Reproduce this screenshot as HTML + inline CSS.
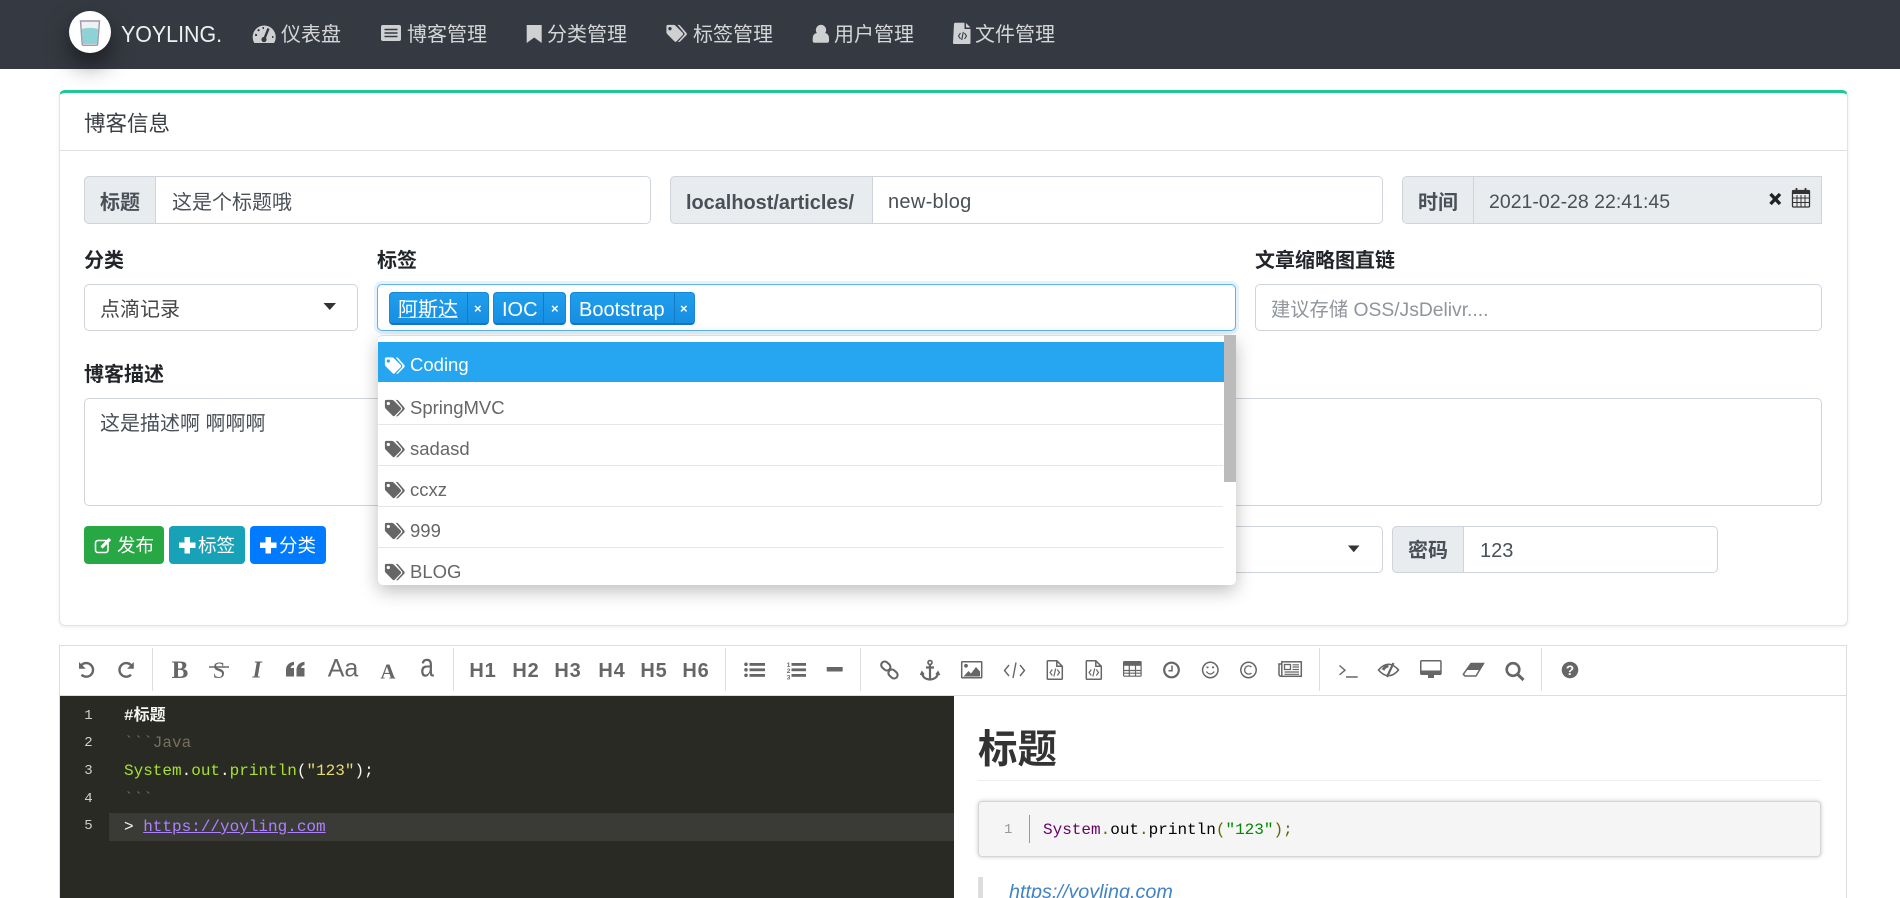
<!DOCTYPE html>
<html lang="zh"><head><meta charset="utf-8"><title>YOYLING</title>
<style>
html,body{margin:0;padding:0;width:1900px;height:898px;overflow:hidden;background:#fff}
body{font-family:"Liberation Sans","Noto Sans CJK SC",sans-serif;font-size:20px;color:#495057;position:relative}
div,span{box-sizing:border-box}
.a{position:absolute}
.t{position:absolute;white-space:nowrap;line-height:28px;height:28px}
.c{position:absolute;white-space:nowrap;transform:translate(-50%,-50%);line-height:1;color:#666}
.b{font-weight:700}
.box{position:absolute;background:#fff;border:1px solid #ced4da;border-radius:5px}
.addon{position:absolute;background:#e9ecef;border:1px solid #ced4da;border-radius:5px 0 0 5px}
.nav{color:#d4d6d8;font-size:20px}
.lab{color:#212529;font-weight:700}
.tag{position:absolute;top:292px;height:33px;border-radius:4px;background:linear-gradient(#1f9fec,#178ee2);border:1px solid #1a86d6;border-bottom:2px solid #1577c4}
.tag i{position:absolute;top:0;bottom:0;width:1px;background:#1579c4}
.w{color:#fff}
.sep{position:absolute;top:648px;height:43px;width:1px;background:#ddd}
.h{font-weight:700;font-size:20px;letter-spacing:.8px;top:671px}
.row{position:absolute;left:378px;width:845px;height:41px;border-bottom:1px solid #e6e6e6}
.dd{color:#666;font-size:18.5px}
.m{font-family:"Liberation Mono","Noto Sans CJK SC",monospace;font-size:16px}
.ln{position:absolute;left:61px;width:49px;text-align:center;padding-left:6px;color:#d0d0d0;font-family:"Liberation Mono",monospace;font-size:14px;line-height:28px;height:28px}
svg{position:absolute;left:0;top:0;overflow:visible}
</style></head><body>

<!-- navbar -->
<div class="a" style="left:0;top:0;width:1900px;height:69px;background:#353a42"></div>
<div class="a" style="left:69px;top:11px;width:41.500px;height:42px;border-radius:50%;background:#fff;box-shadow:0 12px 24px rgba(0,0,0,.5)"></div>
<div class="t" style="left:121px;top:20px;color:#eef0f2;font-size:23px;transform:scaleX(.93);transform-origin:left center">YOYLING.</div>
<div class="t nav" style="left:281px;top:21px">仪表盘</div>
<div class="t nav" style="left:407px;top:21px">博客管理</div>
<div class="t nav" style="left:547px;top:21px">分类管理</div>
<div class="t nav" style="left:693px;top:21px">标签管理</div>
<div class="t nav" style="left:834px;top:21px">用户管理</div>
<div class="t nav" style="left:975px;top:21px">文件管理</div>

<!-- card -->
<div class="a" style="left:59px;top:90px;width:1789px;height:536px;background:#fff;border:1px solid #e2e3e5;border-top:3px solid #1fc796;border-radius:6px;box-shadow:0 1px 3px rgba(0,0,0,.08)"></div>
<div class="a" style="left:60px;top:150px;width:1787px;height:1px;background:#dfe0e2"></div>
<div class="t" style="left:84px;top:110px;color:#3a3f44;font-size:21.500px">博客信息</div>

<!-- row 1 -->
<div class="box" style="left:84px;top:176px;width:567px;height:48px"></div>
<div class="addon" style="left:84px;top:176px;width:72px;height:48px"></div>
<div class="t b" style="left:100px;top:189px">标题</div>
<div class="t" style="left:172px;top:189px">这是个标题哦</div>

<div class="box" style="left:670px;top:176px;width:713px;height:48px"></div>
<div class="addon" style="left:670px;top:176px;width:203px;height:48px"></div>
<div class="t b" style="left:686px;top:189px;font-size:19.900px">localhost/articles/</div>
<div class="t" style="left:888px;top:188px;letter-spacing:.3px">new-blog</div>

<div class="addon" style="left:1402px;top:176px;width:420px;height:48px;border-radius:5px 0 0 5px"></div>
<div class="a" style="left:1473px;top:177px;width:1px;height:46px;background:#ced4da"></div>
<div class="t b" style="left:1418px;top:189px">时间</div>
<div class="t" style="left:1489px;top:188px;font-size:19.500px">2021-02-28 22:41:45</div>

<!-- row 2 -->
<div class="t lab" style="left:84px;top:247px">分类</div>
<div class="t lab" style="left:377px;top:247px">标签</div>
<div class="t lab" style="left:1255px;top:247px">文章缩略图直链</div>

<div class="box" style="left:84px;top:284px;width:274px;height:47px"></div>
<div class="t" style="left:100px;top:296px;color:#444">点滴记录</div>

<div class="box" style="left:377px;top:284px;width:859px;height:47px;border-color:#5db2f0;box-shadow:0 0 0 3px rgba(60,160,240,.14)"></div>
<div class="tag" style="left:389px;width:100px"><i style="left:77px"></i></div>
<div class="t w" style="left:398px;top:296px;text-decoration:underline;text-decoration-thickness:1px;text-decoration-color:rgba(255,255,255,.6)">阿斯达</div>
<div class="t w b" style="left:474px;top:295px;font-size:13px">×</div>
<div class="tag" style="left:493px;width:73px"><i style="left:49px"></i></div>
<div class="t w" style="left:502px;top:296px;">IOC</div>
<div class="t w b" style="left:551px;top:295px;font-size:13px">×</div>
<div class="tag" style="left:570px;width:125px"><i style="left:103px"></i></div>
<div class="t w" style="left:579px;top:296px">Bootstrap</div>
<div class="t w b" style="left:680px;top:295px;font-size:13px">×</div>

<div class="box" style="left:1255px;top:284px;width:567px;height:47px"></div>
<div class="t" style="left:1271px;top:297px;color:#8f959b;font-size:19.300px">建议存储 OSS/JsDelivr....</div>

<!-- description -->
<div class="t lab" style="left:84px;top:361px">博客描述</div>
<div class="box" style="left:84px;top:398px;width:1738px;height:108px"></div>
<div class="t" style="left:100px;top:410px;color:#495057">这是描述啊 啊啊啊</div>

<!-- buttons -->
<div class="a" style="left:84px;top:526px;width:80px;height:38px;background:#28a745;border-radius:4px"></div>
<div class="t w" style="left:117px;top:532px;font-size:18.500px">发布</div>
<div class="a" style="left:169px;top:526px;width:76px;height:38px;background:#17a2b8;border-radius:4px"></div>
<div class="t w" style="left:198px;top:532px;font-size:18.500px">标签</div>
<div class="a" style="left:250px;top:526px;width:76px;height:38px;background:#007bff;border-radius:4px"></div>
<div class="t w" style="left:279px;top:532px;font-size:18.500px">分类</div>

<div class="box" style="left:1100px;top:526px;width:283px;height:47px"></div>
<div class="box" style="left:1392px;top:526px;width:326px;height:47px"></div>
<div class="addon" style="left:1392px;top:526px;width:72px;height:47px"></div>
<div class="t b" style="left:1408px;top:537px">密码</div>
<div class="t" style="left:1480px;top:537px">123</div>

<!-- dropdown -->
<div class="a" style="left:378px;top:335px;width:858px;height:250px;background:#fff;border-radius:5px;border-top:1px solid #dcdcdc;box-shadow:0 6px 18px rgba(0,0,0,.26)"></div>
<div class="a" style="left:378px;top:342px;width:846px;height:40px;background:#26a5f1"></div>
<div class="row" style="top:384px"></div>
<div class="row" style="top:425px"></div>
<div class="row" style="top:466px"></div>
<div class="row" style="top:507px"></div>
<div class="a" style="left:1224px;top:335px;width:12px;height:147px;background:#bbb"></div>
<div class="t dd" style="left:410px;top:351px;color:#fff">Coding</div>
<div class="t dd" style="left:410px;top:394px">SpringMVC</div>
<div class="t dd" style="left:410px;top:435px">sadasd</div>
<div class="t dd" style="left:410px;top:476px">ccxz</div>
<div class="t dd" style="left:410px;top:517px">999</div>
<div class="t dd" style="left:410px;top:558px">BLOG</div>

<!-- editor -->
<div class="a" style="left:59px;top:645px;width:1788px;height:260px;background:#fff;border:1px solid #ddd"></div>
<div class="a" style="left:60px;top:695px;width:1786px;height:1px;background:#ddd"></div>
<div class="a" style="left:60px;top:696px;width:894px;height:210px;background:#292a24"></div>
<div class="a" style="left:109px;top:813px;width:845px;height:28px;background:#3a3b36"></div>
<div class="sep" style="left:152px"></div><div class="sep" style="left:453px"></div><div class="sep" style="left:725px"></div><div class="sep" style="left:860px"></div><div class="sep" style="left:1319px"></div><div class="sep" style="left:1541px"></div>

<!-- toolbar text glyphs -->
<span class="c b" style="left:180px;top:671px;font:700 25px 'Liberation Serif',serif;color:#666">B</span>
<span class="c" style="left:219px;top:671px;font:400 23px 'Liberation Serif',serif;color:#666">S</span>
<span class="c" style="left:257px;top:671px;font:italic 700 24px 'Liberation Serif',serif;color:#666">I</span>
<span class="c" style="left:343px;top:669px;font-size:25px">Aa</span>
<span class="c" style="left:388px;top:672px;font:700 21px 'Liberation Serif',serif;color:#666">A</span>
<span class="c" style="left:427px;top:665px;font-size:33px;transform:translate(-50%,-50%) scaleX(.75)">a</span>
<span class="c h" style="left:483px">H1</span><span class="c h" style="left:526px">H2</span><span class="c h" style="left:568px">H3</span><span class="c h" style="left:612px">H4</span><span class="c h" style="left:654px">H5</span><span class="c h" style="left:696px">H6</span>

<!-- code -->
<div class="ln" style="top:702px">1</div><div class="ln" style="top:729px">2</div><div class="ln" style="top:757px">3</div><div class="ln" style="top:785px">4</div><div class="ln" style="top:812px">5</div>
<div class="t m" style="left:124px;top:702px;color:#f8f8f2;font-weight:700">#标题</div>
<div class="t m" style="left:124px;top:729px;color:#75715e">&#96;&#96;&#96;Java</div>
<div class="t m" style="left:124px;top:757px;color:#f8f8f2"><span style="color:#a6e22e">System</span>.<span style="color:#a6e22e">out</span>.<span style="color:#a6e22e">println</span>(<span style="color:#e6db74">"123"</span>);</div>
<div class="t m" style="left:124px;top:785px;color:#75715e">&#96;&#96;&#96;</div>
<div class="t m" style="left:124px;top:813px;color:#f8f8f2">&gt; <span style="color:#ae81ff;text-decoration:underline">https://yoyling.com</span></div>

<!-- preview -->
<div class="t" style="left:978px;top:730px;height:40px;line-height:40px;font-size:39.500px;font-weight:700;color:#333">标题</div>
<div class="a" style="left:978px;top:780px;width:843px;height:1px;background:#eee"></div>
<div class="a" style="left:978px;top:801px;width:843px;height:56px;background:#f5f5f5;border:1px solid #d5d5d5;border-radius:4px;box-shadow:0 0 4px rgba(0,0,0,.22)"></div>
<div class="t m" style="left:1004px;top:816px;color:#999;font-size:14px">1</div>
<div class="a" style="left:1029px;top:815px;width:1px;height:28px;background:#999"></div>
<div class="t m" style="left:1043px;top:816px;color:#660"><span style="color:#606">System</span>.<span style="color:#000">out</span>.<span style="color:#000">println</span>(<span style="color:#080">"123"</span>);</div>
<div class="a" style="left:978px;top:877px;width:5px;height:30px;background:#ddd"></div>
<div class="t" style="left:1009px;top:878px;color:#4183c4;font-style:italic;font-size:19.800px">https://yoyling.com</div>

<!-- icons -->
<svg width="1900" height="898" viewBox="0 0 1900 898">
<defs>
<path id="tg" fill-rule="evenodd" d="M1 2.500Q1 1 2.500 1H9Q10 1 11 2L18.500 9.500Q19.500 10.500 18.500 12L12 18.500Q10.800 19.800 9.500 18.500L2 11Q1 10 1 9ZM4.800 3.200A1.800 1.800 0 1 0 4.801 6.800A1.800 1.800 0 1 0 4.800 3.200ZM13 1H14.300Q15.200 1 16 2L22.500 9.500Q23.500 10.500 22.500 12L15.800 18.800Q14.800 19.800 13.500 19L20 12Q21 10.700 20 9.500Z"/>
<g id="fc" fill="none" stroke="#666"><path stroke-width="1.500" fill="#fff" d="M1 1.500Q1 .8 1.800 .8H10.500L16 6.300V18.500Q16 19.200 15.200 19.200H1.800Q1 19.200 1 18.500Z"/><path stroke-width="1.500" d="M10.500 1V6.300H16"/><path stroke-width="1.200" d="M6 9.500L3.800 12.500L6 15.500M11 9.500L13.200 12.500L11 15.500M9.400 8.500L7.600 16.500"/></g>
</defs>

<!-- nav icons -->
<g fill="#cfd0d2">
<path d="M252.700 37a11.500 11.500 0 1 1 23 0c0 2.300-.6 4.400-1.700 6h-19.600c-1.100-1.600-1.700-3.700-1.700-6z"/>
<rect x="381" y="25" width="20" height="16" rx="2"/>
<path d="M526.700 25h15v18l-7.500-5.500-7.500 5.500z"/>
<use href="#tg" transform="translate(665.500,24) scale(.93)"/>
<circle cx="821" cy="30" r="5.200"/>
<path d="M812.700 41v-2.500q0-4.500 3.800-5.500q4.500 3 9 0q3.500 1 3.500 5.500v2.500q0 1.800-2 1.800h-12.300q-2 0-2-1.800z"/>
<path d="M954 24q0-1.300 1.300-1.300h9.200v6.300h6v13.700q0 1.300-1.300 1.300h-14.900q-1.300 0-1.300-1.300zM966 23l4.500 4.500h-4.500z"/>
</g>
<g fill="none" stroke="#353a42">
<path stroke-width="2.400" d="M263.500 41L268.500 28.500"/>
<circle cx="264" cy="39.500" r="2.600" fill="#353a42" stroke="none"/>
<path stroke-width="2" stroke-dasharray="2 3.500" d="M256 36a8 8 0 0 1 8-8"/>
<path stroke-width="1.800" d="M272 37h1.500"/>
<path stroke-width="1.400" d="M384.500 29.500h13M384.500 33h13M384.500 36.500h13"/>
<path stroke-width="1.100" d="M960.500 33l-2 3 2 3M964.500 33l2 3-2 3M963.300 32l-1.600 8"/>
</g>

<!-- logo glass -->
<path d="M80.500 21h19l-1.800 23q-.1 1.300-1.300 1.300h-12.800q-1.300 0-1.400-1.300z" fill="#eef0f2" stroke="#9d97a8" stroke-width="1.400"/>
<path d="M81.800 29q8-2.200 16.400 0l-1.200 15h-14z" fill="#8dd3d6"/>

<!-- time icons -->
<path d="M1770.500 194l9.500 10M1780 194l-9.500 10" stroke="#222" stroke-width="3.400" fill="none"/>
<g fill="none" stroke="#333"><rect x="1792.500" y="190.500" width="17" height="16.500" stroke-width="1.300" rx="1"/><path stroke-width="1" d="M1793 198h16M1793 202.500h16M1797 195v12M1801 195v12M1805 195v12"/><path stroke-width="3" d="M1793 192.500h16"/><path stroke-width="1.800" d="M1796.500 188v4M1805.500 188v4"/></g>

<!-- select carets -->
<path d="M323.500 303h12.500l-6.250 7z" fill="#333"/>
<path d="M1348 545.500h11.500l-5.750 6.800z" fill="#333"/>

<!-- dropdown tags -->
<use href="#tg" transform="translate(384,356.500) scale(.9)" fill="#fff"/>
<g fill="#666">
<use href="#tg" transform="translate(384,399) scale(.9)"/>
<use href="#tg" transform="translate(384,440) scale(.9)"/>
<use href="#tg" transform="translate(384,481) scale(.9)"/>
<use href="#tg" transform="translate(384,522) scale(.9)"/>
<use href="#tg" transform="translate(384,563) scale(.9)"/>
</g>

<!-- button icons -->
<g fill="none" stroke="#fff"><rect x="95.500" y="540.500" width="12.500" height="12" rx="2.500" stroke-width="1.600"/><path stroke-width="3.200" d="M101.500 547.500L110 539"/></g>
<path d="M184.500 537h5.500v5.500h5.500v5.500h-5.500v5.500h-5.500v-5.500h-5.500v-5.500h5.500z" fill="#fff"/>
<path d="M265.500 537h5.500v5.500h5.500v5.500h-5.500v5.500h-5.500v-5.500h-5.500v-5.500h5.500z" fill="#fff"/>

<!-- toolbar -->
<g fill="#666">
<path d="M79 662v6.800h6.800z"/><path d="M133.800 662v6.800h-6.800z"/>
<path d="M286 670q0-7 8-8.300v3.300q-3 .6-3.400 3h3.400v8.500h-8zM296.500 670q0-7 8-8.300v3.300q-3 .6-3.400 3h3.400v8.500h-8z"/>
<circle cx="746" cy="664.300" r="1.800"/><circle cx="746" cy="669.800" r="1.800"/><circle cx="746" cy="675.300" r="1.800"/>
<rect x="749.500" y="663" width="15.500" height="2.800"/><rect x="749.500" y="668.400" width="15.500" height="2.800"/><rect x="749.500" y="674" width="15.500" height="2.800"/>
<rect x="791.500" y="663" width="14.500" height="2.800"/><rect x="791.500" y="668.400" width="14.500" height="2.800"/><rect x="791.500" y="674" width="14.500" height="2.800"/>
<rect x="826.700" y="667" width="16" height="4.500" rx=".5"/>
<path d="M963.500 676.500l5-5.500 2.500 2.500 5-6.500 4 4.500v5z"/><circle cx="966" cy="665.800" r="1.900"/>
<rect x="1123" y="661" width="18.700" height="15.700" rx="1.200"/>
<rect x="1420" y="660" width="21.700" height="15" rx="1.800"/><rect x="1428" y="675" width="6" height="3"/>
<circle cx="1570" cy="670" r="8.300"/>
<text x="786.800" y="667" font-size="6.500" font-family="Liberation Sans,sans-serif" font-weight="700">1</text>
<text x="786.800" y="673" font-size="6.500" font-family="Liberation Sans,sans-serif" font-weight="700">2</text>
<text x="786.800" y="679.500" font-size="6.500" font-family="Liberation Sans,sans-serif" font-weight="700">3</text>
</g>
<rect x="1124.200" y="665.800" width="16.300" height="9.800" fill="#fff"/>
<g fill="none" stroke="#666">
<path stroke-width="2.400" d="M81.500 674.800A6.800 6.800 0 1 0 81.500 665"/>
<path stroke-width="2.400" d="M131 674.800A6.800 6.800 0 1 1 131 665"/>
<path stroke-width="1.500" d="M209 667h20"/>
<rect x="880.800" y="662.500" width="10" height="7" rx="3.500" stroke-width="2.100" transform="rotate(42 885.800 666)"/>
<rect x="888" y="670.500" width="10" height="7" rx="3.500" stroke-width="2.100" transform="rotate(42 893 674)"/>
<circle cx="930" cy="662.500" r="2" stroke-width="1.700"/>
<path stroke-width="2.200" d="M930 664.500V679M926 667.500h8M922 673q.8 6 8 6.500q7.200-.5 8-6.500"/>
<path stroke-width="1.600" d="M920.500 675l1.500-3 2 2.500M939.500 675l-1.500-3-2 2.500"/>
<rect x="961.700" y="661.700" width="20" height="16" stroke-width="1.500" rx=".5"/>
<path stroke-width="1.400" d="M1009 665l-4.500 5.500 4.500 5.500M1020 665l4.500 5.500-4.500 5.500M1016 662.500l-3 15.500"/>
<path stroke-width="1.200" d="M1123.500 670.500h18M1123.500 673.200h18M1129.300 665.500v11M1135.500 665.500v11"/>
<circle cx="1171.500" cy="670" r="7.300" stroke-width="2.200"/><path stroke-width="1.500" d="M1172 665.500v5.300h-3.500"/>
<circle cx="1210.300" cy="670" r="7.700" stroke-width="1.500"/><path stroke-width="1.300" d="M1206.300 671.500q4 5 8 0"/><path stroke-width="2" d="M1207.500 666.500v1.800M1213 666.500v1.800"/>
<circle cx="1248.500" cy="670" r="7.700" stroke-width="1.500"/><path stroke-width="1.300" d="M1251.500 667a4.100 4.100 0 1 0 0 6"/>
<rect x="1281.800" y="661.800" width="19.500" height="14.500" stroke-width="1.500"/><path stroke-width="1.500" d="M1281.800 664h-2.800v10.300q0 2 2.800 2"/><rect x="1284.500" y="664.500" width="6" height="5" stroke-width="1.300"/><path stroke-width="1.200" d="M1292.500 664.800h6.500M1292.500 667h6.500M1292.500 669.500h6.500M1284.500 672h14.500M1284.500 674.300h14.500"/>
<path stroke-width="1.400" d="M1339.500 665.500l5.500 4.700-5.500 4.700M1346 677h11.700"/>
<path stroke-width="1.600" d="M1378.500 670q10-11.500 20 0q-10 11.500-20 0z"/><path stroke-width="2.200" d="M1393.500 663l-6.500 14"/><path stroke-width="3" d="M1383 670q2-4 5.500-4"/>
<path stroke-width="1.500" d="M1463.300 674.300L1471 663.500H1483.500L1476 676H1465z"/>
<circle cx="1513" cy="669.500" r="6.300" stroke-width="2.600"/><path stroke-width="3" d="M1517.800 674.500l5.700 5.500"/>
</g>
<path d="M1471 663.500H1483.500L1479 670H1466.600z" fill="#666"/>
<rect x="1421.500" y="661.500" width="18.700" height="9" fill="#fff"/>
<text x="1570" y="675" text-anchor="middle" font-size="13.500" font-weight="700" font-family="Liberation Sans,sans-serif" fill="#fff">?</text>
<use href="#fc" transform="translate(1046.300,660)"/>
<use href="#fc" transform="translate(1085.300,660)"/>
</svg>
</body></html>
